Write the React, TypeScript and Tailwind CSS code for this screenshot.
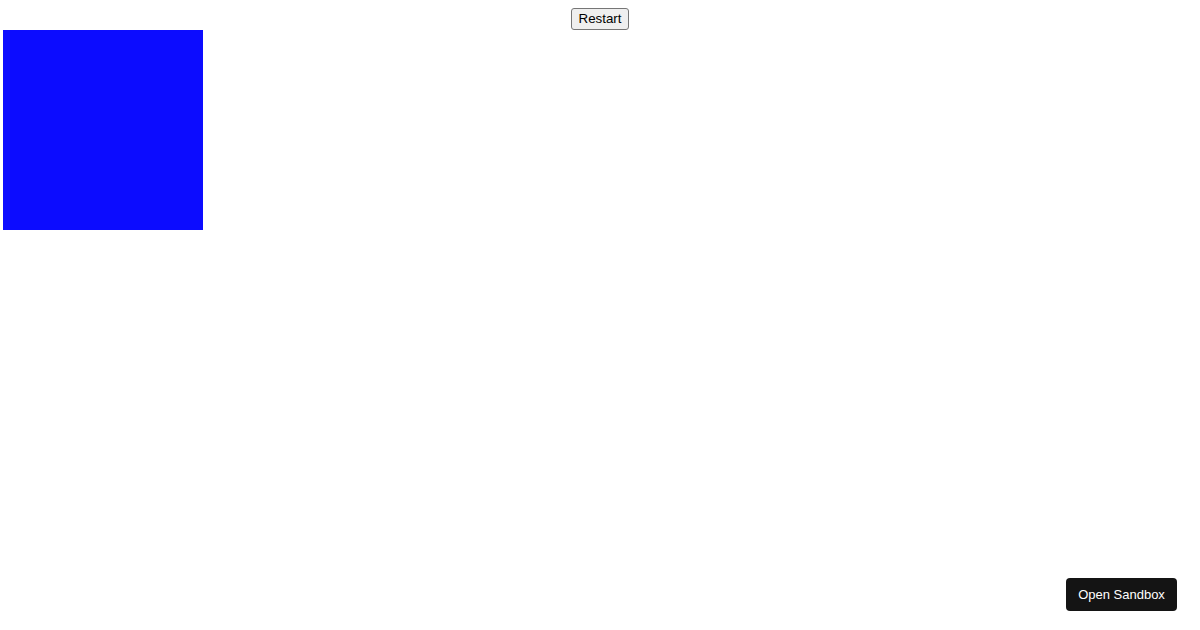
export default function App() {
  return (
    <div className="relative w-[1200px] h-[630px] bg-white overflow-hidden">
      <div className="flex justify-center pt-2">
        <button className="h-[22px] px-[7px] bg-[#efefef] border border-[#767676] rounded-[3px] text-[13.33px] text-black leading-none font-['Liberation_Sans',Arial,sans-serif]">
          Restart
        </button>
      </div>
      <div className="ml-[3px] w-[200px] h-[200px] bg-[#0c0cff]" />
      <button className="absolute right-[23px] bottom-[19px] w-[111px] h-[33px] rounded-[4px] bg-[#141414] text-white text-[13px] font-['Liberation_Sans',Arial,sans-serif]">
        Open Sandbox
      </button>
    </div>
  );
}
